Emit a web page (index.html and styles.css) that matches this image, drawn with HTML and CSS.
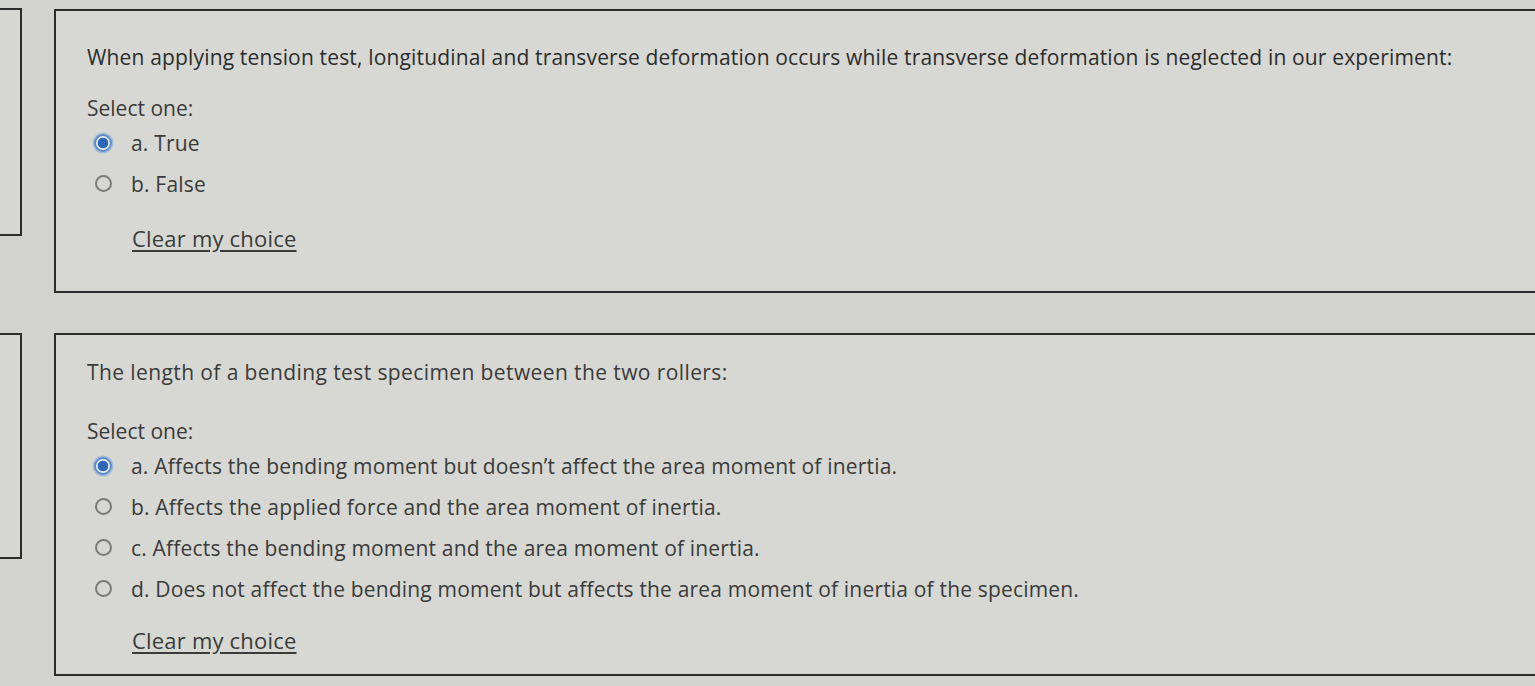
FILE: index.html
```html
<!DOCTYPE html>
<html lang="en">
<head>
<meta charset="utf-8">
<title>Quiz</title>
<link rel="stylesheet" href="styles.css">
</head>
<body>
<div class="page">
  <aside class="nav-col">
    <div class="nav-box nav-box-1"></div>
    <div class="nav-box nav-box-2"></div>
  </aside>
  <main class="questions">
    <section class="que que-1">
      <p class="qtext qtext-1">When applying tension test, longitudinal and transverse deformation occurs while transverse deformation is neglected in our experiment:</p>
      <p class="prompt prompt-1">Select one:</p>
      <div class="answers">
        <label class="opt"><span class="radio checked"></span><span class="opt-text">a. True</span></label>
        <label class="opt"><span class="radio"></span><span class="opt-text">b. False</span></label>
      </div>
      <a class="clear clear-1" href="#">Clear my choice</a>
    </section>
    <section class="que que-2">
      <p class="qtext qtext-2">The length of a bending test specimen between the two rollers:</p>
      <p class="prompt prompt-2">Select one:</p>
      <div class="answers">
        <label class="opt"><span class="radio checked"></span><span class="opt-text">a. Affects the bending moment but doesn’t affect the area moment of inertia.</span></label>
        <label class="opt"><span class="radio"></span><span class="opt-text">b. Affects the applied force and the area moment of inertia.</span></label>
        <label class="opt"><span class="radio"></span><span class="opt-text">c. Affects the bending moment and the area moment of inertia.</span></label>
        <label class="opt"><span class="radio"></span><span class="opt-text">d. Does not affect the bending moment but affects the area moment of inertia of the specimen.</span></label>
      </div>
      <a class="clear clear-2" href="#">Clear my choice</a>
    </section>
  </main>
</div>
</body>
</html>
```

FILE: styles.css
```css
html, body {
  margin: 0;
  padding: 0;
  height: 100%;
  overflow: hidden;
}

body {
  background: #d2d3ce;
  font-family: "Open Sans", "Noto Sans", sans-serif;
  color: #3a3b3a;
}

.page {
  display: flex;
  align-items: flex-start;
  height: 686px;
}

/* left navigation blocks */
.nav-col {
  width: 22px;
  flex: none;
  display: flex;
  flex-direction: column;
}

.nav-box {
  border: 2px solid #2b2c2b;
  border-left: none;
  background: #d6d7d2;
}

.nav-box-1 {
  margin-top: 8px;
  height: 224px;
}

.nav-box-2 {
  margin-top: 97px;
  height: 222px;
}

/* question cards */
.questions {
  flex: 1;
  margin-left: 32px;
  display: flex;
  flex-direction: column;
  gap: 40px;
  padding-top: 9px;
}

.que {
  border: 2px solid #2b2c2b;
  border-right: none;
  background: #d7d8d3;
  padding-left: 31px;
}

.que-1 {
  height: 280px;
}

.que-2 {
  height: 339px;
}

p {
  margin: 0;
}

.qtext {
  font-size: 21px;
  line-height: 28px;
  white-space: nowrap;
}

.qtext-1 {
  margin-top: 32px;
  color: #2c2d2c;
  letter-spacing: 0.16px;
}

.qtext-2 {
  margin-top: 23px;
  letter-spacing: 0.4px;
}

.prompt {
  font-size: 21px;
  line-height: 28px;
}

.prompt-1 {
  margin-top: 23px;
}

.prompt-2 {
  margin-top: 31px;
}

.answers {
  display: flex;
  flex-direction: column;
  margin-top: 0;
}

.opt {
  display: flex;
  align-items: center;
  height: 41px;
  font-size: 21px;
}

.opt-text {
  letter-spacing: 0.18px;
}

.radio {
  width: 13px;
  height: 13px;
  border: 2px solid #7c7d7b;
  border-radius: 50%;
  margin-left: 8px;
  margin-right: 19px;
  flex: none;
}

.radio.checked {
  width: 14px;
  height: 14px;
  border: 2px solid #5a8ac8;
  background: radial-gradient(circle, #2e67b8 0 5px, #e4eaf2 5.6px);
  margin-left: 7px;
  margin-right: 19px;
  box-shadow: 0 0 0 1.5px #a5bcd9;
}

.clear {
  display: inline-block;
  margin-left: 45px;
  font-size: 22px;
  line-height: 28px;
  letter-spacing: 0.2px;
  color: #3a3b3a;
  text-decoration: underline;
  text-underline-offset: 3px;
}

.clear-1 {
  margin-top: 20px;
}

.clear-2 {
  margin-top: 17px;
}
```
